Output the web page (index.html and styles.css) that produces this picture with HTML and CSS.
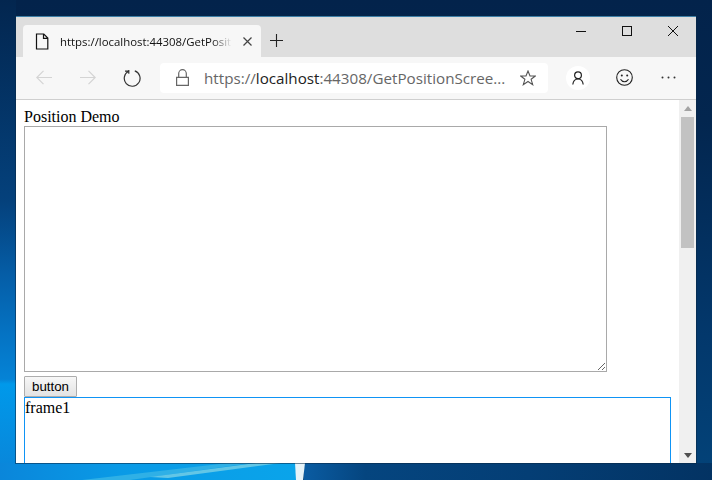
FILE: index.html
```html
<!DOCTYPE html>
<html lang="en">
<head>
<meta charset="utf-8">
<title>Position Demo</title>
<link rel="stylesheet" href="styles.css">
</head>
<body>
<div class="desktop">
  <svg class="wallpaper" width="712" height="480" viewBox="0 0 712 480" aria-hidden="true">
    <defs>
      <linearGradient id="leftStrip" x1="0" y1="0" x2="0" y2="1">
        <stop offset="0" stop-color="#03264f"/>
        <stop offset=".42" stop-color="#04417c"/>
        <stop offset=".57" stop-color="#055da6"/>
        <stop offset=".69" stop-color="#0572c2"/>
        <stop offset=".79" stop-color="#0583d6"/>
        <stop offset=".80" stop-color="#0099ea"/>
        <stop offset="1" stop-color="#0a84d8"/>
      </linearGradient>
      <linearGradient id="floorLeft" x1="0" y1="0" x2="1" y2="0">
        <stop offset="0" stop-color="#0a86da"/>
        <stop offset=".4" stop-color="#0a9ae6"/>
        <stop offset="1" stop-color="#0aa4ea"/>
      </linearGradient>
      <linearGradient id="floorRight" x1="0" y1="0" x2="1" y2="0">
        <stop offset="0" stop-color="#0a5ca2"/>
        <stop offset=".15" stop-color="#05457f"/>
        <stop offset=".55" stop-color="#043e75"/>
        <stop offset="1" stop-color="#033363"/>
      </linearGradient>
    </defs>
    <rect x="0" y="0" width="16" height="480" fill="url(#leftStrip)"/>
    <rect x="0" y="463" width="296" height="17" fill="url(#floorLeft)"/>
    <rect x="304" y="463" width="408" height="17" fill="url(#floorRight)"/>
    <polygon points="82,480 228,463 252,463 130,480" fill="#2fb0e6"/>
    <polygon points="150,477 256,463 281,463 168,478" fill="#62c6e6"/>
    <polygon points="295,463 305,463 303,480 296,480" fill="#e6f3f8"/>
  </svg>
  <main class="window">
    <div class="titlebar">
      <div class="tab">
        <svg class="tab-icon" width="14" height="17" viewBox="0 0 14 17"><path d="M1.500 1h7.300l4 4v11h-11.300z M8.500 1v4.300h4.300" fill="none" stroke="#111" stroke-width="1.200"/></svg>
        <span class="tab-title">https://localhost:44308/GetPositionScreen</span>
        <svg class="tab-close" width="9" height="9" viewBox="0 0 9 9"><path d="M.5.500l8 8M8.500.500l-8 8" stroke="#444" stroke-width="1.200"/></svg>
      </div>
      <svg class="new-tab" width="13" height="13" viewBox="0 0 13 13"><path d="M6.500 0v13M0 6.500h13" stroke="#222" stroke-width="1.100"/></svg>
      <div class="win-controls">
        <svg width="10" height="10" viewBox="0 0 10 10"><path d="M0 5.500h10" stroke="#111"/></svg>
        <svg width="10" height="10" viewBox="0 0 10 10"><rect x=".5" y=".5" width="9" height="9" fill="none" stroke="#111"/></svg>
        <svg width="10" height="10" viewBox="0 0 10 10"><path d="M0 0l10 10M10 0L0 10" stroke="#111"/></svg>
      </div>
    </div>
    <div class="toolbar">
      <svg class="nav-btn" width="16" height="15" viewBox="0 0 16 15"><path d="M16 7.500H.8M7.500.8L.8 7.500l6.700 6.700" fill="none" stroke="#d4d4d4" stroke-width="1.200"/></svg>
      <svg class="nav-btn" width="16" height="15" viewBox="0 0 16 15"><path d="M0 7.500h15.200M8.500.8l6.700 6.700-6.700 6.700" fill="none" stroke="#d4d4d4" stroke-width="1.200"/></svg>
      <svg class="reload" width="18" height="18" viewBox="0 0 18 18"><path d="M5.600 2.300A7.900 7.900 0 1 0 11.800 1.900M5.800 1v3.800M2 2.100h3.800" fill="none" stroke="#333" stroke-width="1.200"/></svg>
      <div class="address">
        <svg class="lock" width="13" height="17" viewBox="0 0 13 17"><path d="M2.700 8V4.500a3.800 3.800 0 0 1 7.600 0V8M.6 8.300h11.800v8.100H.6z" fill="none" stroke="#666" stroke-width="1.200"/></svg>
        <span class="url">https://<b class="host">localhost</b>:44308/GetPositionScree...</span>
        <svg class="star" width="16" height="16" viewBox="0 0 16 16"><path d="M8 1l2 5h5.300l-4.200 3.300 1.600 5.400L8 11.500l-4.700 3.200 1.600-5.400L.7 6H6z" fill="none" stroke="#555" stroke-width="1.100"/></svg>
      </div>
      <div class="profile">
        <svg width="12" height="14" viewBox="0 0 12 14"><circle cx="6" cy="4.300" r="3.400" fill="none" stroke="#222" stroke-width="1.200"/><path d="M.8 13.500c.4-3.500 2.300-5.500 5.200-5.500s4.800 2 5.200 5.500" fill="none" stroke="#222" stroke-width="1.200"/></svg>
      </div>
      <svg class="smiley" width="17" height="17" viewBox="0 0 17 17"><circle cx="8.500" cy="8.500" r="7.800" fill="none" stroke="#222" stroke-width="1.100"/><circle cx="5.800" cy="6.500" r="1" fill="#222"/><circle cx="11.200" cy="6.500" r="1" fill="#222"/><path d="M4.500 10.300c1 1.700 2.400 2.400 4 2.400s3-.7 4-2.400" fill="none" stroke="#222" stroke-width="1.100"/></svg>
      <svg class="more" width="15" height="3" viewBox="0 0 15 3"><circle cx="1.500" cy="1.500" r="1" fill="#333"/><circle cx="7.500" cy="1.500" r="1" fill="#333"/><circle cx="13.500" cy="1.500" r="1" fill="#333"/></svg>
    </div>
    <div class="viewport">
      <div class="page">
        <div class="heading">Position Demo</div>
        <textarea class="memo" aria-label="Position output"></textarea>
        <button class="action" type="button">button</button>
        <div class="frame">frame1</div>
      </div>
      <div class="scrollbar">
        <span class="arrow arrow-up"></span>
        <span class="thumb"></span>
        <span class="arrow arrow-down"></span>
      </div>
    </div>
  </main>
</div>
</body>
</html>
```

FILE: styles.css
```css
* { box-sizing: border-box; }
html, body { margin: 0; padding: 0; }
body { width: 712px; height: 480px; overflow: hidden; }

.desktop {
  position: relative;
  width: 712px;
  height: 480px;
  padding: 16px 16px 17px;
  background: linear-gradient(180deg, #03234b 0, #03264f 25%, #03386c 70%, #034379 100%);
}
.wallpaper { position: absolute; left: 0; top: 0; }

.window {
  position: relative;
  display: flex;
  flex-direction: column;
  width: 680px;
  height: 447px;
  border-top: 1px solid #3d7fa8;
  box-shadow: 0 0 0 1px rgba(10, 40, 70, .55);
  font-family: "Open Sans", "Noto Sans", sans-serif;
}

.titlebar {
  display: flex;
  align-items: flex-end;
  flex: none;
  height: 40px;
  padding-left: 7px;
  background: #dedede;
}
.tab {
  display: flex;
  align-items: center;
  width: 238px;
  height: 32px;
  padding: 0 9px 0 12px;
  background: #f7f7f7;
  border-radius: 4px 4px 0 0;
}
.tab-icon { flex: none; margin-right: 11px; }
.tab-title {
  flex: none;
  width: 172px;
  overflow: hidden;
  white-space: nowrap;
  font-size: 11.4px;
  color: #111;
  -webkit-mask-image: linear-gradient(90deg, #000 152px, transparent 172px);
  mask-image: linear-gradient(90deg, #000 152px, transparent 172px);
}
.tab-close { flex: none; margin-left: 11px; }
.new-tab { flex: none; margin: 0 0 10px 9px; }
.win-controls {
  display: flex;
  gap: 36px;
  margin: 0 18px 21px auto;
}

.toolbar {
  display: flex;
  align-items: center;
  flex: none;
  height: 43px;
  padding: 0 20px 1px 20px;
  background: #f7f7f7;
  border-bottom: 1px solid #cfcfcf;
}
.nav-btn { flex: none; margin-right: 28px; }
.reload { flex: none; margin-left: -1px; margin-right: 19px; }
.address {
  display: flex;
  align-items: center;
  flex: none;
  width: 388px;
  height: 30px;
  padding: 0 12px 0 16px;
  background: #fff;
  border-radius: 4px;
}
.lock { flex: none; margin-right: 15px; }
.url {
  flex: 1;
  min-width: 0;
  white-space: nowrap;
  overflow: hidden;
  font-size: 15.2px;
  color: #666;
}
.host { font-weight: 400; color: #222; }
.star { flex: none; }
.profile {
  display: flex;
  align-items: center;
  justify-content: center;
  flex: none;
  width: 24px;
  height: 24px;
  margin-left: 18px;
  background: #fff;
  border-radius: 50%;
}
.smiley { flex: none; margin-left: 26px; }
.more { flex: none; margin-left: 28px; }

.viewport {
  display: flex;
  flex: 1;
  min-height: 0;
  overflow: hidden;
  background: #fff;
}
.page {
  flex: 1;
  min-width: 0;
  padding: 8px 8px 0;
  font-family: "Liberation Serif", "Times New Roman", serif;
  font-size: 16px;
  color: #000;
}
.heading { height: 18px; line-height: 18px; }
.memo {
  display: block;
  width: 583px;
  height: 246px;
  margin: 0 0 4px;
  padding: 2px;
  border: 1px solid #a9a9a9;
  border-radius: 0;
  background: #fff;
  outline: none;
}
.action {
  display: block;
  width: 53px;
  height: 21px;
  padding: 0;
  border: 1px solid #adadad;
  border-radius: 1px;
  background: linear-gradient(180deg, #f7f7f7, #e3e3e3);
  font-family: "Liberation Sans", Arial, sans-serif;
  font-size: 13.33px;
  color: #000;
}
.frame {
  width: 647px;
  height: 160px;
  padding: 1px 1px 1px 0;
  border: 1px solid #0f94f5;
  line-height: 18px;
}

.scrollbar {
  display: flex;
  flex-direction: column;
  align-items: center;
  flex: none;
  width: 17px;
  padding: 6px 0 5px;
  background: #f0f0f0;
}
.arrow {
  flex: none;
  width: 0;
  height: 0;
  border-left: 4px solid transparent;
  border-right: 4px solid transparent;
}
.arrow-up { border-bottom: 5px solid #a3a3a3; }
.arrow-down { border-top: 5px solid #505050; margin-top: auto; }
.thumb {
  flex: none;
  width: 13px;
  height: 131px;
  margin-top: 6px;
  background: #c2c2c2;
}
```
